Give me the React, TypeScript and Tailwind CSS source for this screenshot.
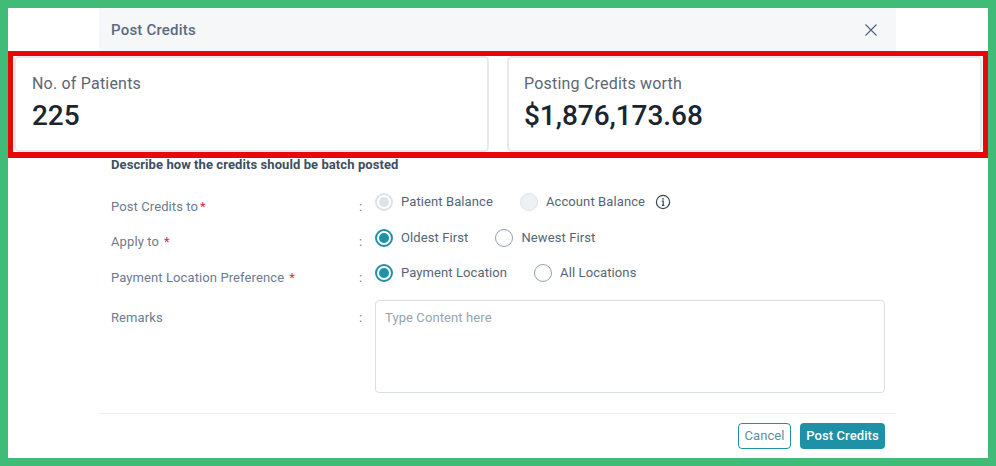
import React from "react";

const bodyText = "text-[13px] tracking-[0.1px] leading-[18px]";

function Radio({ state }: { state: "on" | "off" | "disabledOn" | "disabledOff" }) {
  if (state === "on")
    return (
      <span className="w-[18px] h-[18px] rounded-full border-2 border-[#1f91a6] flex items-center justify-center shrink-0 bg-white">
        <span className="w-[10px] h-[10px] rounded-full bg-[#1f91a6]" />
      </span>
    );
  if (state === "off")
    return <span className="w-[18px] h-[18px] rounded-full border border-[#8fa1b3] shrink-0 bg-white" />;
  if (state === "disabledOn")
    return (
      <span className="w-[18px] h-[18px] rounded-full border-2 border-[#dde2e9] flex items-center justify-center shrink-0 bg-white">
        <span className="w-[10px] h-[10px] rounded-full bg-[#dde2e9]" />
      </span>
    );
  return <span className="w-[18px] h-[18px] rounded-full border border-[#e0e5ea] bg-[#edf0f4] shrink-0" />;
}

function Option({ state, label, gap = "mr-[27px]" }: { state: "on" | "off" | "disabledOn" | "disabledOff"; label: string; gap?: string }) {
  return (
    <div className={`flex items-center gap-[8px] ${gap}`}>
      <Radio state={state} />
      <span className={`${bodyText} text-[#556575]`}>{label}</span>
    </div>
  );
}

function Label({ text, star, spaced }: { text: string; star?: boolean; spaced?: boolean }) {
  return (
    <div className={`w-[248px] shrink-0 ${bodyText} text-[#6c7c8e] flex`}>
      <span>{text}</span>
      {star && <span className={`text-[#d0343c] ${spaced ? "ml-[5px]" : "ml-[2px]"}`}>*</span>}
    </div>
  );
}

function Colon({ pad }: { pad: string }) {
  return <span className={`w-[16px] shrink-0 ${bodyText} text-[#6c7c8e] ${pad}`}>:</span>;
}

function Stat({ label, value, cls }: { label: string; value: string; cls: string }) {
  return (
    <div className={`h-[96px] rounded-[5px] border-2 border-[#e6eaf0] bg-white flex flex-col ${cls}`}>
      <div className="text-[16px] tracking-[0.2px] leading-[20px] text-[#5c6670] mt-[16px]">{label}</div>
      <div className="text-[28px] tracking-[-0.05px] leading-[34px] font-medium text-[#1b2530] mt-[5px]">{value}</div>
    </div>
  );
}

export default function App() {
  return (
    <div className="relative w-[996px] h-[466px] border-8 border-[#41bb78] bg-white flex flex-col overflow-hidden font-['Roboto',sans-serif]">
      <div className="ml-[91px] w-[797px] h-[43px] shrink-0 bg-[#f6f7f9] flex items-center justify-between pl-[12px] pr-[18px]">
        <span className="text-[15px] tracking-[0.2px] font-medium text-[#5b6b80] mt-[1px]">Post Credits</span>
        <svg width="14" height="14" viewBox="0 0 14 14" fill="none" stroke="#4f6080" strokeWidth="1.1">
          <path d="M1.5 1.5 12.5 12.5M12.5 1.5 1.5 12.5" />
        </svg>
      </div>

      <div className="h-[107px] w-full shrink-0 border-[5px] border-b-[6px] border-[#e90707] flex pl-[1px] gap-[18px]">
        <Stat label="No. of Patients" value="225" cls="w-[475px] pl-[16px]" />
        <Stat label="Posting Credits worth" value="$1,876,173.68" cls="w-[475px] pl-[15px]" />
      </div>

      <div className="ml-[91px] w-[797px] flex flex-col flex-1 min-h-0">
        <div className="pl-[12px] text-[13px] tracking-[0.08px] leading-[14px] font-bold text-[#3d4e62]">
          Describe how the credits should be batch posted
        </div>

        <div className="pl-[12px] flex flex-col mt-[26px]">
          <div className="flex items-start h-[35px]">
            <Label text="Post Credits to" star />
            <Colon pad="pt-0" />
            <div className="flex items-center mt-[-6px] h-[20px]">
              <Option state="disabledOn" label="Patient Balance" />
              <Option state="disabledOff" label="Account Balance" gap="mr-[10px]" />
              <svg width="16" height="16" viewBox="0 0 16 16" fill="none" stroke="#3a4450" strokeWidth="1.2">
                <circle cx="8" cy="8" r="6.6" />
                <path d="M6.8 7.2H8.2V11.2M6.8 11.4H9.4" />
                <circle cx="8" cy="4.9" r="0.8" fill="#3a4450" stroke="none" />
              </svg>
            </div>
          </div>
          <div className="flex items-start h-[36px]">
            <Label text="Apply to" star spaced />
            <Colon pad="pt-0" />
            <div className="flex items-center mt-[-5px] h-[20px]">
              <Option state="on" label="Oldest First" />
              <Option state="off" label="Newest First" />
            </div>
          </div>
          <div className="flex items-start h-[31px]">
            <Label text="Payment Location Preference" star spaced />
            <Colon pad="pt-0" />
            <div className="flex items-center mt-[-6px] h-[20px]">
              <Option state="on" label="Payment Location" />
              <Option state="off" label="All Locations" />
            </div>
          </div>
          <div className="flex items-start">
            <div className="pt-[9px]"><Label text="Remarks" /></div>
            <Colon pad="pt-[9px]" />
            <div className={`w-[510px] h-[93px] rounded-[4px] border border-[#d8dfe7] bg-white px-[9px] pt-[8px] ${bodyText} text-[#94a4b3]`}>
              Type Content here
            </div>
          </div>
        </div>

        <div className="mt-[20px] border-t border-[#eceef1] h-[1px] shrink-0" />
        <div className="flex justify-end items-center gap-[9px] pr-[11px] mt-[9px]">
          <div className={`w-[53px] h-[26px] rounded-[4px] border border-[#1f91a6] flex items-center justify-center ${bodyText} text-[#5e8ea5]`}>
            Cancel
          </div>
          <div className={`w-[85px] h-[26px] rounded-[4px] bg-[#1f91a6] flex items-center justify-center ${bodyText} font-medium text-white`}>
            Post Credits
          </div>
        </div>
      </div>
    </div>
  );
}
